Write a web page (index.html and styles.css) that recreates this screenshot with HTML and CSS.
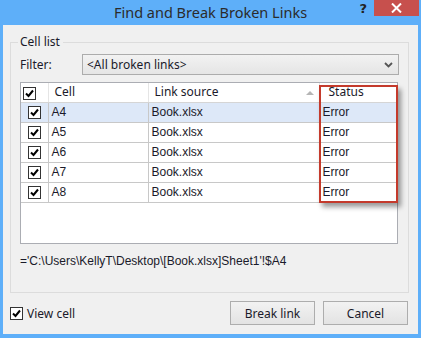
FILE: index.html
```html
<!DOCTYPE html>
<html lang="en">
<head>
  <meta charset="UTF-8" />
  <title>Find and Break Broken Links</title>
  <link rel="stylesheet" href="styles.css">
</head>
<body>

  <div class="window">
    <div class="titlebar">
      <span></span>
      <div class="title">Find and Break Broken Links</div>
      <div class="controls">
        <span class="help">?</span>
        <span class="close">
          <svg width="11" height="10" viewBox="0 0 11 10"><path d="M1 0.5 L10 9.5 M10 0.5 L1 9.5" stroke="#fff" stroke-width="2"/></svg>
        </span>
      </div>
    </div>

    <div class="client">
      <div class="group">
        <div class="group-title">Cell list</div>

        <div class="filter-row">
          <label>Filter:</label>
          <div class="combo">
            <span>&lt;All broken links&gt;</span>
            <svg width="9" height="6" viewBox="0 0 9 6"><path d="M1 1 L4.5 4.5 L8 1" stroke="#555" stroke-width="1.8" fill="none"/></svg>
          </div>
        </div>

        <div class="list">
          <table>
            <thead>
              <tr>
                <th class="c-check"><span class="check head"></span></th>
                <th class="c-cell">Cell</th>
                <th class="c-link">Link source<span class="sort"></span></th>
                <th class="c-status">Status</th>
              </tr>
            </thead>
            <tbody>
              <tr class="selected">
                <td class="c-check"><span class="check"></span></td>
                <td>A4</td><td>Book.xlsx</td><td class="err">Error</td>
              </tr>
              <tr>
                <td class="c-check"><span class="check"></span></td>
                <td>A5</td><td>Book.xlsx</td><td class="err">Error</td>
              </tr>
              <tr>
                <td class="c-check"><span class="check"></span></td>
                <td>A6</td><td>Book.xlsx</td><td class="err">Error</td>
              </tr>
              <tr>
                <td class="c-check"><span class="check"></span></td>
                <td>A7</td><td>Book.xlsx</td><td class="err">Error</td>
              </tr>
              <tr>
                <td class="c-check"><span class="check"></span></td>
                <td>A8</td><td>Book.xlsx</td><td class="err">Error</td>
              </tr>
            </tbody>
          </table>
          <div class="highlight"></div>
        </div>

        <div class="path">='C:\Users\KellyT\Desktop\[Book.xlsx]Sheet1'!$A4</div>
      </div>

      <div class="bottom">
        <label class="view"><span class="check"></span>View cell</label>
        <div class="buttons">
          <button type="button">Break link</button>
          <button type="button">Cancel</button>
        </div>
      </div>
    </div>
  </div>

</body>
</html>
```

FILE: styles.css
```css
* {
  box-sizing: border-box;
}

body {
  margin: 0;
  font-family: 'Noto Sans', sans-serif;
  font-size: 12px;
  color: #1a1a2a;
}

.window {
  width: 421px;
  height: 338px;
  background: #5eaff9;
  display: flex;
  flex-direction: column;
  padding: 0 3px 4px;
}

.titlebar {
  height: 25px;
  display: grid;
  grid-template-columns: 1fr auto 1fr;
  margin: 0 -3px;
}

.title {
  font-size: 14.5px;
  color: #2b2b2b;
  line-height: 24px;
}

.controls {
  display: flex;
  justify-content: flex-end;
  align-items: flex-start;
}

.help {
  font-family: 'DejaVu Sans', sans-serif;
  font-weight: bold;
  font-size: 13px;
  color: #222;
  margin: 0 7px 0 0;
  line-height: 18px;
}

.close {
  width: 45px;
  height: 16px;
  background: #c7504d;
  margin-right: 2px;
  display: flex;
  align-items: center;
  justify-content: center;
}

.client {
  flex: 1;
  background: #f0f0f0;
  padding: 17px 9px 0 7px;
}

.group {
  border: 1px solid #dcdcdc;
  height: 251px;
  padding: 0 9px 0 9px;
}

.group-title {
  display: inline-block;
  margin: -9px 0 0 -2px;
  padding: 0 3px 0 2px;
  background: #f0f0f0;
  line-height: 16px;
  vertical-align: top;
}

.filter-row {
  display: flex;
  align-items: center;
  margin-top: -6px;
  height: 21px;
}

.filter-row label {
  width: 62px;
}

.combo {
  flex: 1;
  height: 21px;
  border: 1px solid #acacac;
  background: linear-gradient(#f2f2f2, #e5e5e5);
  display: flex;
  align-items: center;
  justify-content: space-between;
  padding: 0 5px 0 4px;
}

.list {
  position: relative;
  margin: 7px 1px 0 0;
  height: 162px;
  border: 1px solid #abadb3;
  background: #fff;
}

table {
  border-collapse: collapse;
  table-layout: fixed;
  width: 100%;
}

th {
  font-weight: normal;
  text-align: left;
  height: 19px;
  line-height: 16px;
  padding: 0 0 0 6px;
  border-left: 1px solid #e5e5e5;
  border-bottom: 1px solid #d5d5d5;
  position: relative;
}

th:first-child {
  border-left: none;
}

td {
  font-family: 'Liberation Sans', sans-serif;
  height: 20px;
  line-height: 16px;
  padding: 0 0 0 3px;
  border: 1px solid #c8c8c8;
  border-top: none;
}

td:first-child {
  border-left: none;
}

td:last-child {
  border-right: none;
}

.c-check {
  width: 27px;
  padding: 0;
}

.c-cell {
  width: 100px;
}

.c-link {
  width: 171px;
}

.c-status {
  padding-left: 9px;
}

.selected td {
  background: #dde8f8;
}

.check {
  display: inline-block;
  width: 13px;
  height: 13px;
  border: 1px solid #333;
  background: #fff url("data:image/svg+xml,%3Csvg xmlns='http://www.w3.org/2000/svg' width='11' height='11'%3E%3Cpath d='M2 5.5 L4.5 8 L9 2.5' stroke='%23000' stroke-width='2' fill='none'/%3E%3C/svg%3E") center no-repeat;
  vertical-align: middle;
}

td .check {
  margin-left: 7px;
}

th .check.head {
  margin-left: 2px;
}

.sort {
  position: absolute;
  right: 5px;
  top: 8px;
  width: 0;
  height: 0;
  border-left: 4px solid transparent;
  border-right: 4px solid transparent;
  border-bottom: 4px solid #b5b5b5;
}

.highlight {
  position: absolute;
  left: 298px;
  top: 2px;
  width: 79px;
  height: 118px;
  border: 2px solid #c43a2c;
  box-shadow: 3px 4px 5px rgba(0, 0, 0, 0.4);
}

.path {
  font-family: 'Liberation Sans', sans-serif;
  margin-top: 9px;
  line-height: 16px;
}

.bottom {
  display: flex;
  justify-content: space-between;
  align-items: center;
  margin-top: 8px;
}

.view {
  display: flex;
  align-items: center;
  gap: 4px;
}

.buttons {
  display: flex;
  gap: 8px;
  margin-right: 1px;
}

button {
  font-family: 'Noto Sans', sans-serif;
  font-size: 12px;
  color: #1a1a2a;
  width: 85px;
  height: 24px;
  border: 1px solid #adadad;
  background: linear-gradient(#f2f2f2, #e3e3e3);
  padding: 0;
}
```
